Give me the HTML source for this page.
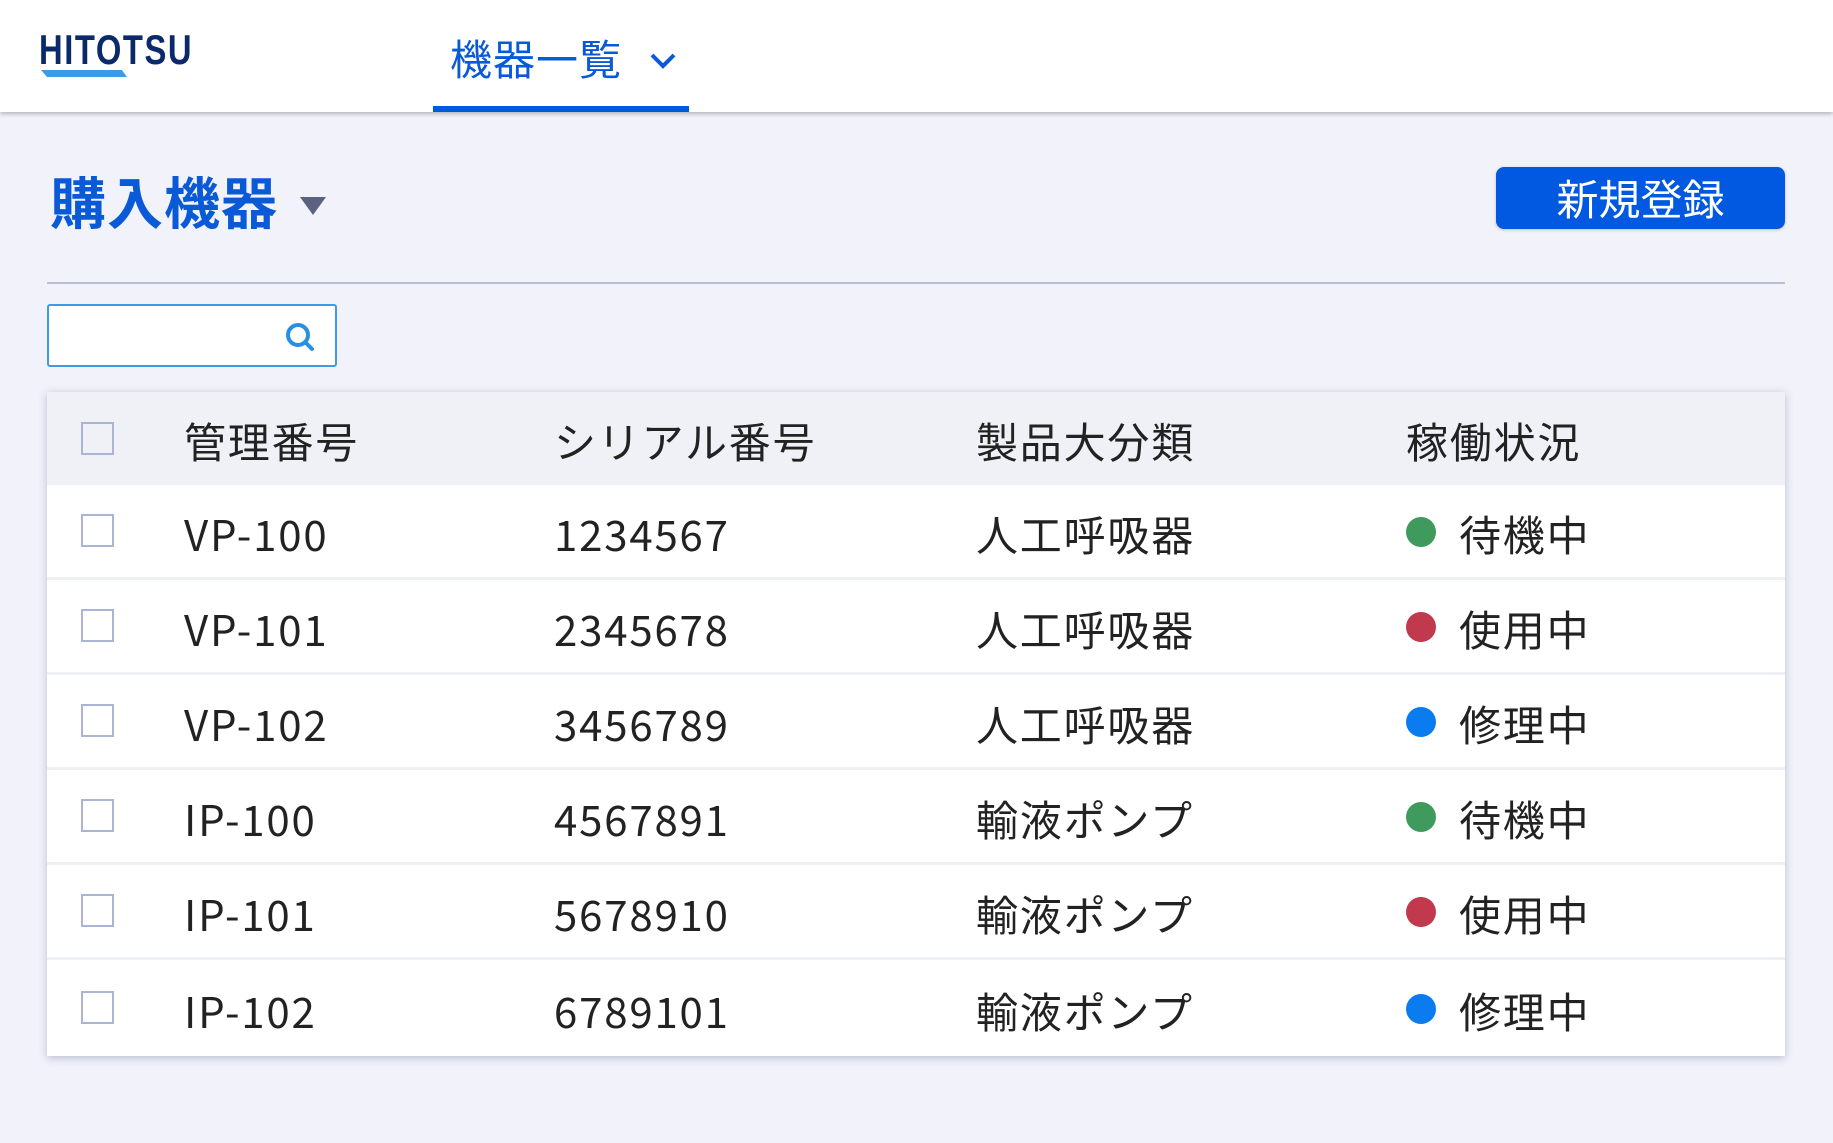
<!DOCTYPE html>
<html><head><meta charset="utf-8"><style>
*{margin:0;padding:0;box-sizing:border-box}
body{width:1833px;height:1143px;background:#f1f2fa;font-family:"Noto Sans CJK JP","Liberation Sans",sans-serif;position:relative;overflow:hidden;color:#222}
.hdr{position:absolute;left:0;top:0;width:1833px;height:112px;background:#fff;box-shadow:0 2px 4px rgba(0,0,0,.25)}
.logo{position:absolute;left:39px;top:26px;font-family:"Liberation Sans",sans-serif;font-weight:bold;font-size:42px;letter-spacing:2px;color:#0b2a6b;transform:scaleX(.78);transform-origin:left top;line-height:48px}
.bar{position:absolute;left:41px;top:70px;width:86px;height:7px;background:#3a9be8;clip-path:polygon(0 0,94% 0,100% 100%,7% 100%)}
.nav{position:absolute;left:450px;top:30px;font-size:42px;color:#0a5ad8;line-height:56px;letter-spacing:1px}
.chev{position:absolute;left:648px;top:50px}
.ul{position:absolute;left:433px;top:106px;width:256px;height:6px;background:#0059e0}
.title{position:absolute;left:50px;top:165px;font-size:56px;font-weight:bold;color:#0a5ad8;line-height:72px;letter-spacing:1px}
.tri{position:absolute;left:300px;top:197px;width:0;height:0;border-left:13px solid transparent;border-right:13px solid transparent;border-top:18px solid #5a6280}
.btn{position:absolute;left:1496px;top:167px;width:289px;height:62px;background:#0059e0;border-radius:8px;color:#fff;font-size:42px;text-align:center;line-height:62px;box-shadow:0 1px 3px rgba(0,0,0,.2)}
.line{position:absolute;left:47px;top:282px;width:1738px;height:2px;background:#b8c0d8}
.search{position:absolute;left:47px;top:304px;width:290px;height:63px;border:2px solid #3a9be8;border-radius:3px;background:#fff}
.tbl{position:absolute;left:47px;top:392px;width:1738px;height:664px;background:#fff;box-shadow:0 2px 8px rgba(60,70,110,.3)}
.row{position:absolute;left:0;width:1738px;height:95px;border-bottom:3px solid #eef0f5}
.row.h{background:#f0f1f6;height:93px;border:none}
.cb{position:absolute;left:34px;top:50%;margin-top:-17px;width:33px;height:33px;border:2px solid #aab4d4;background:#fff}
.row.h .cb{background:#f0f1f6}
.c{position:absolute;top:2px;height:100%;display:flex;align-items:center;font-size:42px;color:#222;letter-spacing:1.8px}
.dot{position:absolute;left:1359px;top:50%;margin-top:-14px;width:30px;height:30px;border-radius:50%}
</style></head><body>
<div class="hdr">
<div class="logo">HITOTSU</div><div class="bar"></div>
<div class="nav">機器一覧</div>
<svg class="chev" width="30" height="22" viewBox="0 0 30 22"><path d="M4 5 L15 16 L26 5" fill="none" stroke="#0a5ad8" stroke-width="4"/></svg>
<div class="ul"></div>
</div>
<div class="title">購入機器</div><div class="tri"></div>
<div class="btn">新規登録</div>
<div class="line"></div>
<div class="search"><svg style="position:absolute;left:235px;top:15px" width="32" height="32" viewBox="0 0 32 32"><circle cx="14" cy="14" r="10" fill="none" stroke="#2a8fe0" stroke-width="4"/><path d="M21 21 L28 28" stroke="#2a8fe0" stroke-width="4" stroke-linecap="round"/></svg></div>
<div class="tbl">
<div class="row h" style="top:0"><div class="cb"></div><div class="c" style="left:137px">管理番号</div><div class="c" style="left:507px">シリアル番号</div><div class="c" style="left:929px">製品大分類</div><div class="c" style="left:1359px">稼働状況</div></div>
<div class="row" style="top:93px"><div class="cb"></div><div class="c" style="left:137px">VP-100</div><div class="c" style="left:507px">1234567</div><div class="c" style="left:929px">人工呼吸器</div><div class="dot" style="background:#3f9a5e"></div><div class="c" style="left:1412px">待機中</div></div>
<div class="row" style="top:188px"><div class="cb"></div><div class="c" style="left:137px">VP-101</div><div class="c" style="left:507px">2345678</div><div class="c" style="left:929px">人工呼吸器</div><div class="dot" style="background:#c0394d"></div><div class="c" style="left:1412px">使用中</div></div>
<div class="row" style="top:283px"><div class="cb"></div><div class="c" style="left:137px">VP-102</div><div class="c" style="left:507px">3456789</div><div class="c" style="left:929px">人工呼吸器</div><div class="dot" style="background:#0a7cf0"></div><div class="c" style="left:1412px">修理中</div></div>
<div class="row" style="top:378px"><div class="cb"></div><div class="c" style="left:137px">IP-100</div><div class="c" style="left:507px">4567891</div><div class="c" style="left:929px">輸液ポンプ</div><div class="dot" style="background:#3f9a5e"></div><div class="c" style="left:1412px">待機中</div></div>
<div class="row" style="top:473px"><div class="cb"></div><div class="c" style="left:137px">IP-101</div><div class="c" style="left:507px">5678910</div><div class="c" style="left:929px">輸液ポンプ</div><div class="dot" style="background:#c0394d"></div><div class="c" style="left:1412px">使用中</div></div>
<div class="row" style="top:568px;border:none;height:96px"><div class="cb"></div><div class="c" style="left:137px">IP-102</div><div class="c" style="left:507px">6789101</div><div class="c" style="left:929px">輸液ポンプ</div><div class="dot" style="background:#0a7cf0"></div><div class="c" style="left:1412px">修理中</div></div>
</div>
</body></html>
